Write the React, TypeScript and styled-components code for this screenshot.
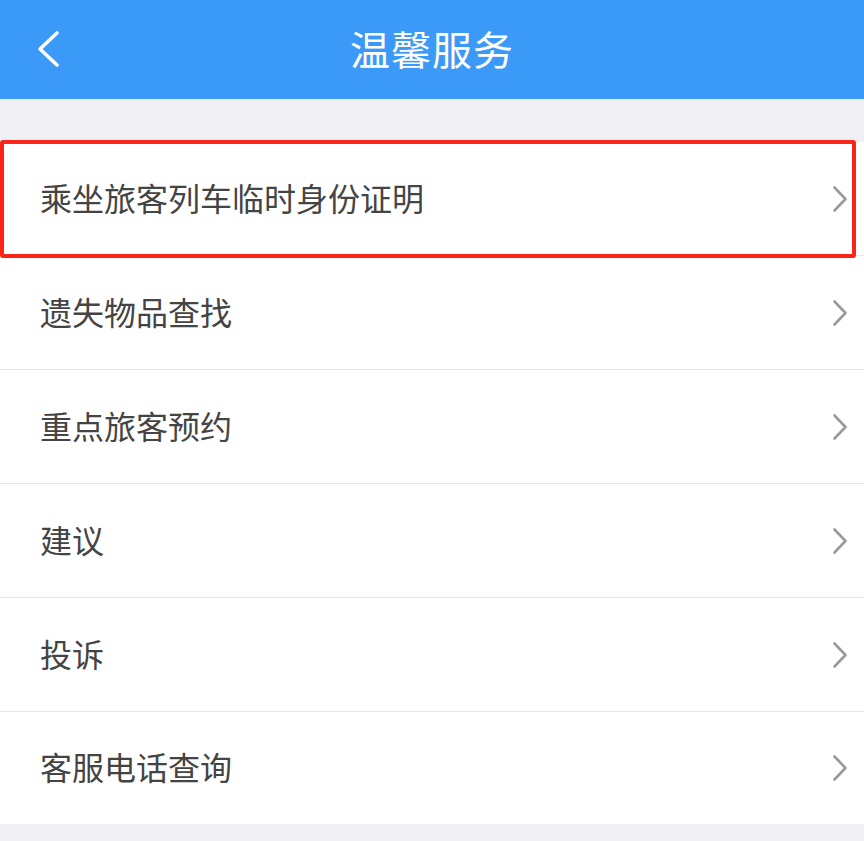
import styled, { createGlobalStyle } from "styled-components";

const GlobalStyle = createGlobalStyle`
    html, body {
        margin: 0;
        padding: 0;
        background: #efeff4;
        font-family: "Noto Sans CJK SC", "Noto Sans", sans-serif;
    }
`

const Page = styled.div`
    width: 864px;
    min-height: 841px;
    background: #efeff4;
`
const Header = styled.header`
    height: 99px;
    background: #3b9af8;
    display: flex;
    align-items: center;
    justify-content: center;
    position: relative;
`
const Title = styled.h1`
    margin: 0 0 3px;
    color: #fff;
    font-size: 40px;
    font-weight: 400;
    letter-spacing: 1px;
`
const BackButton = styled.button`
    position: absolute;
    left: 30px;
    top: 27px;
    width: 36px;
    height: 44px;
    padding: 0;
    border: 0;
    background: none;
    display: flex;
    align-items: center;
    justify-content: center;
    cursor: pointer;
`
const List = styled.ul`
    list-style: none;
    margin: 0;
    padding: 0;
    margin-top: 43px;
    background: #fff;
`
const Row = styled.li<{ highlighted?: boolean }>`
    position: relative;
    height: 114px;
    box-sizing: border-box;
    display: flex;
    align-items: center;
    justify-content: space-between;
    padding: 0 16px 0 40px;
    border-bottom: 1px solid #e6e6e6;
    color: #444;
    font-size: 32px;
    &:last-child {
        border-bottom: 0;
        height: 112px;
    }
    ${props => props.highlighted && `
        &::after {
            content: "";
            position: absolute;
            top: -2px;
            left: 0;
            right: 8px;
            bottom: -3px;
            border: 4px solid #fb2418;
            border-radius: 3px;
            pointer-events: none;
        }
    `}
`
const Label = styled.span`
    line-height: 1;
    margin-bottom: 4px;
`

const items = [
    "乘坐旅客列车临时身份证明",
    "遗失物品查找",
    "重点旅客预约",
    "建议",
    "投诉",
    "客服电话查询",
]

function Chevron() {
    return (
        <svg width="16" height="28" viewBox="0 0 16 28">
            <path d="M2.5 2.5 L13.5 14 L2.5 25.5" fill="none" stroke="#9a9a9a" strokeWidth="2.6" strokeLinecap="round" strokeLinejoin="round" />
        </svg>
    )
}

export default function App() {
    return (
        <Page>
            <GlobalStyle />
            <Header>
                <BackButton aria-label="返回">
                    <svg width="26" height="38" viewBox="0 0 26 38">
                        <path d="M22 3 L5 19 L22 35" fill="none" stroke="#fff" strokeWidth="3.6" strokeLinecap="round" strokeLinejoin="round" />
                    </svg>
                </BackButton>
                <Title>温馨服务</Title>
            </Header>
            <List>
                {items.map((item, i) => (
                    <Row key={item} highlighted={i === 0}>
                        <Label>{item}</Label>
                        <Chevron />
                    </Row>
                ))}
            </List>
        </Page>
    )
}
